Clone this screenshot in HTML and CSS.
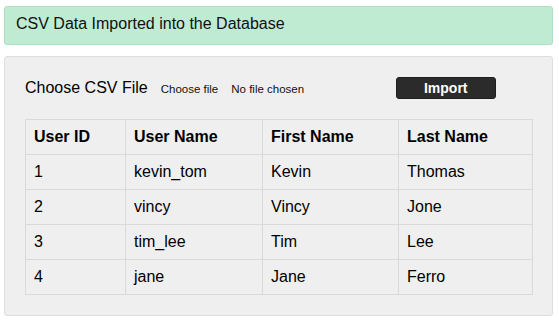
FILE: index.html
```html
<!DOCTYPE html>
<html>
<head>
<meta charset="utf-8">
<link rel="stylesheet" href="styles.css">
</head>
<body>
<div class="alert">CSV Data Imported into the Database</div>
<div class="panel">
  <form class="upload-row">
    <span class="label">Choose CSV File</span>
    <span class="file-input"><span class="file-btn">Choose file</span><span class="file-name">No file chosen</span></span>
    <button type="button" class="import-btn">Import</button>
  </form>
  <table class="data-table">
    <colgroup>
      <col class="c1"><col class="c2"><col class="c3"><col class="c4">
    </colgroup>
    <thead>
      <tr><th>User ID</th><th>User Name</th><th>First Name</th><th>Last Name</th></tr>
    </thead>
    <tbody>
      <tr><td>1</td><td>kevin_tom</td><td>Kevin</td><td>Thomas</td></tr>
      <tr><td>2</td><td>vincy</td><td>Vincy</td><td>Jone</td></tr>
      <tr><td>3</td><td>tim_lee</td><td>Tim</td><td>Lee</td></tr>
      <tr><td>4</td><td>jane</td><td>Jane</td><td>Ferro</td></tr>
    </tbody>
  </table>
</div>
</body>
</html>
```
FILE: styles.css
```css
html, body {
  margin: 0;
  padding: 0;
  background: #ffffff;
}
body {
  font-family: "Liberation Sans", Arial, sans-serif;
  color: #000;
  padding: 6px 6px 0 4px;
  width: 549px;
}
.alert {
  background: #c0ebd3;
  border: 1px solid #addfc3;
  border-radius: 3px;
  font-size: 16px;
  line-height: 18px;
  padding: 8px 11px 11px 11px;
  color: #111;
}
.panel {
  margin-top: 11px;
  background: #efefef;
  border: 1px solid #dedede;
  border-radius: 3px;
  padding: 20px;
}
.upload-row {
  display: flex;
  align-items: baseline;
  margin: 0 0 20px 0;
}
.label {
  font-size: 16px;
  line-height: 18px;
  margin-right: 13px;
}
.file-input {
  width: 235px;
  font-size: 11.5px;
  line-height: 14px;
  color: #111;
}
.file-btn {
  margin-right: 13px;
}
.import-btn {
  width: 100px;
  height: 22px;
  padding: 0;
  margin: 0;
  background: #2b2b2b;
  border: 1px solid #1e1e1e;
  border-radius: 3px;
  color: #fff;
  font-family: "Liberation Sans", Arial, sans-serif;
  font-weight: bold;
  font-size: 14px;
  line-height: 20px;
}
.data-table {
  border-collapse: collapse;
  table-layout: fixed;
  width: 507px;
  font-size: 16px;
}
.c1 { width: 100px; }
.c2 { width: 137px; }
.c3 { width: 136px; }
.c4 { width: 134px; }
.data-table th,
.data-table td {
  border: 1px solid #d9d9d9;
  padding: 8px 8px;
  line-height: 18px;
  text-align: left;
  color: #000;
}
.data-table th {
  font-weight: bold;
}
```
